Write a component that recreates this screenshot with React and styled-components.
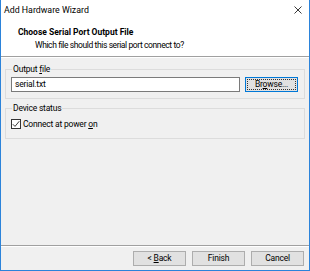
import React from "react";
import styled, { createGlobalStyle } from "styled-components";

const GlobalStyle = createGlobalStyle`
  html, body {
    margin: 0;
    padding: 0;
    background: #ffffff;
  }
  body {
    font-family: Roboto, "Noto Sans", sans-serif;
    font-size: 8.5px;
    letter-spacing: -0.2px;
    color: #000;
  }
`;

const Window = styled.div`
  box-sizing: border-box;
  width: 310px;
  height: 271px;
  display: flex;
  flex-direction: column;
  border: 1px solid #2b83da;
  border-top: none;
  background: #f0f0f0;
`;

const TitleBar = styled.div`
  display: flex;
  align-items: center;
  justify-content: space-between;
  height: 20px;
  padding: 0 7px 2px 3px;
  background: #fff;
  font-size: 8.8px;
  letter-spacing: 0;
`;

const CloseIcon = () => (
  <svg width="8" height="8" viewBox="0 0 8 8">
    <path d="M0.5 0.5 L7.5 7.5 M7.5 0.5 L0.5 7.5" stroke="#222" strokeWidth="0.9" />
  </svg>
);

const Header = styled.div`
  height: 35px;
  background: #fff;
  border-bottom: 1px solid #a0a0a0;
  box-shadow: 0 1px 0 #fff;
  padding: 4px 0 0 17px;
  box-sizing: border-box;
  h1 {
    margin: 0;
    font-size: 8.5px;
    font-weight: 700;
    line-height: 12px;
    letter-spacing: 0;
  }
  p {
    margin: 1px 0 0 17px;
    font-size: 8.5px;
    line-height: 12px;
    letter-spacing: -0.4px;
  }
`;

const Body = styled.div`
  flex: 1;
  padding: 7px 4px 0 4px;
  display: flex;
  flex-direction: column;
  gap: 4px;
`;

const Group = styled.fieldset`
  margin: 0;
  padding: ${(p) => (p.$tall ? "3px 6px 9px 5px" : "2px 6px 6px 5px")};
  border: 1px solid #dcdcdc;
  min-width: 0;
  legend {
    padding: 0 1px;
    margin-left: 1px;
    font-size: 8.5px;
    line-height: 11px;
  }
`;

const Row = styled.div`
  display: flex;
  align-items: center;
  gap: 5px;
`;

const TextBox = styled.div`
  box-sizing: border-box;
  flex: 1;
  height: 15px;
  background: #fff;
  border: 1px solid #7a7a7a;
  padding: 0 3px;
  line-height: 13px;
  font-size: 8.5px;
`;

const Button = styled.button`
  box-sizing: border-box;
  width: 53px;
  height: 15px;
  padding: 0;
  font-family: inherit;
  font-size: 8.5px;
  letter-spacing: -0.2px;
  line-height: 13px;
  color: #000;
  background: #e1e1e1;
  border: 1px solid ${(p) => (p.$focus ? "#0078d7" : "#adadad")};
  outline: ${(p) => (p.$focus ? "1px dotted #333" : "none")};
  outline-offset: -3px;
  u {
    text-decoration: underline;
  }
`;

const Check = styled.label`
  display: flex;
  align-items: center;
  gap: 2px;
  margin-top: 2px;
`;

const Box = styled.span`
  box-sizing: border-box;
  width: 10px;
  height: 10px;
  border: 1px solid #333;
  background: #fff;
  display: flex;
  align-items: center;
  justify-content: center;
`;

const Footer = styled.div`
  height: 25px;
  border-top: 1px solid #a0a0a0;
  box-shadow: inset 0 1px 0 #fff;
  display: flex;
  justify-content: flex-end;
  align-items: flex-start;
  gap: 6px;
  padding: 5px 5px 0 0;
  box-sizing: border-box;
`;

export default function App() {
  return (
    <>
      <GlobalStyle />
      <Window>
        <TitleBar>
          <span>Add Hardware Wizard</span>
          <CloseIcon />
        </TitleBar>
        <Header>
          <h1>Choose Serial Port Output File</h1>
          <p>Which file should this serial port connect to?</p>
        </Header>
        <Body>
          <Group>
            <legend>
              Output <u>f</u>ile
            </legend>
            <Row>
              <TextBox>serial.txt</TextBox>
              <Button $focus>
                Br<u>o</u>wse...
              </Button>
            </Row>
          </Group>
          <Group $tall>
            <legend>Device status</legend>
            <Check>
              <Box>
                <svg width="8" height="8" viewBox="0 0 8 8">
                  <path d="M0.8 4.2 L3 6.4 L7.3 1.2" fill="none" stroke="#222" strokeWidth="0.9" />
                </svg>
              </Box>
              <span>
                Connect at power <u>o</u>n
              </span>
            </Check>
          </Group>
        </Body>
        <Footer>
          <Button>
            &lt; <u>B</u>ack
          </Button>
          <Button>Finish</Button>
          <Button>Cancel</Button>
        </Footer>
      </Window>
    </>
  );
}
